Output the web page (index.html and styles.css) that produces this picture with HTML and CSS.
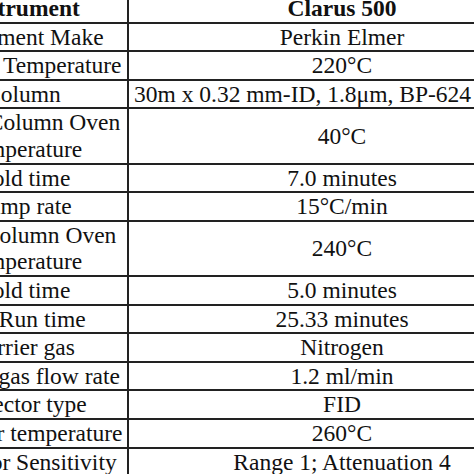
FILE: index.html
```html
<!DOCTYPE html>
<html lang="en">
<head>
<meta charset="utf-8">
<title>Clarus 500 GC conditions</title>
<link rel="stylesheet" href="styles.css">
</head>
<body>
<div class="frame">
<table class="gc">
<colgroup><col class="c-param"><col class="c-value"></colgroup>
<thead>
<tr><th>Instrument</th><th>Clarus 500</th></tr>
</thead>
<tbody>
<tr><td>Instrument Make</td><td>Perkin Elmer</td></tr>
<tr><td>Injector Temperature</td><td>220°C</td></tr>
<tr><td>Column</td><td class="left">30m x 0.32 mm-ID, 1.8μm, BP-624</td></tr>
<tr><td>Initial Column Oven<br>Temperature</td><td>40°C</td></tr>
<tr><td>Hold time</td><td>7.0 minutes</td></tr>
<tr><td>Ramp rate</td><td>15°C/min</td></tr>
<tr><td>Final Column Oven<br>Temperature</td><td>240°C</td></tr>
<tr><td>Hold time</td><td>5.0 minutes</td></tr>
<tr><td>GC Run time</td><td>25.33 minutes</td></tr>
<tr><td>Carrier gas</td><td>Nitrogen</td></tr>
<tr><td>Carrier gas flow rate</td><td>1.2 ml/min</td></tr>
<tr><td>Detector type</td><td>FID</td></tr>
<tr><td>Detector temperature</td><td>260°C</td></tr>
<tr><td>Detector Sensitivity</td><td>Range 1; Attenuation 4</td></tr>
</tbody>
</table>
</div>
</body>
</html>
```
FILE: styles.css
```css
html, body {
  margin: 0;
  padding: 0;
  background: #fff;
}
.frame {
  width: 474px;
  height: 474px;
  overflow: hidden;
}
.gc {
  table-layout: fixed;
  border-collapse: collapse;
  width: 638px;
  margin-left: -83px;
  margin-top: -7px;
  font-family: "Liberation Serif", "Times New Roman", serif;
  font-size: 23.5px;
  line-height: 26.6px;
  color: #111;
}
.c-param { width: 210px; }
.c-value { width: 428px; }
.gc th, .gc td {
  border: 2px solid #222;
  padding: 0;
  text-align: center;
  vertical-align: middle;
  white-space: nowrap;
  overflow: hidden;
}
.gc th { font-weight: bold; }
.gc td.left {
  text-align: left;
  padding-left: 5px;
}
```
